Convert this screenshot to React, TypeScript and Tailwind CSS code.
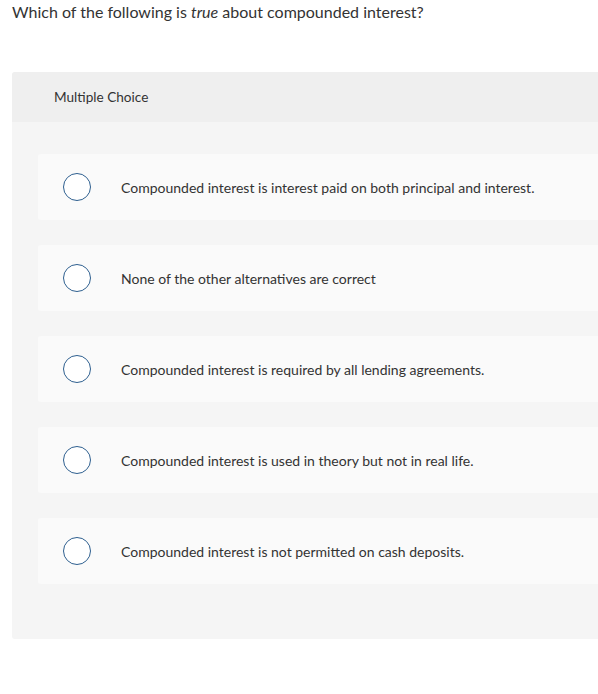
const options = [
  'Compounded interest is interest paid on both principal and interest.',
  'None of the other alternatives are correct',
  'Compounded interest is required by all lending agreements.',
  'Compounded interest is used in theory but not in real life.',
  'Compounded interest is not permitted on cash deposits.',
];

export default function App() {
  return (
    <div className="min-h-[694px] w-[598px] overflow-hidden bg-white text-[#333333]" style={{ fontFamily: 'Lato, "Open Sans", sans-serif' }}>
      <p className="pl-[12px] pt-[2px] text-[16px] leading-[20px]">
        Which of the following is <em>true</em> about compounded interest?
      </p>

      <div className="ml-[12px] mt-[50px] rounded-l-[3px] bg-[#f5f5f5]">
        <div className="flex h-[50px] items-center rounded-tl-[3px] bg-[#efefef] pl-[42px] text-[13.6px]">
          Multiple Choice
        </div>
        <div className="flex flex-col gap-[25px] pb-[55px] pl-[26px] pt-[32px]">
          {options.map((text) => (
            <div key={text} className="flex h-[66px] items-center rounded-l-[3px] bg-[#fafafa]">
              <span className="ml-[25px] h-[28px] w-[28px] shrink-0 rounded-full border-[1.5px] border-[#2e5f8f] bg-white" />
              <span className="ml-[30px] pt-[1px] text-[14px]">{text}</span>
            </div>
          ))}
        </div>
      </div>
    </div>
  );
}
